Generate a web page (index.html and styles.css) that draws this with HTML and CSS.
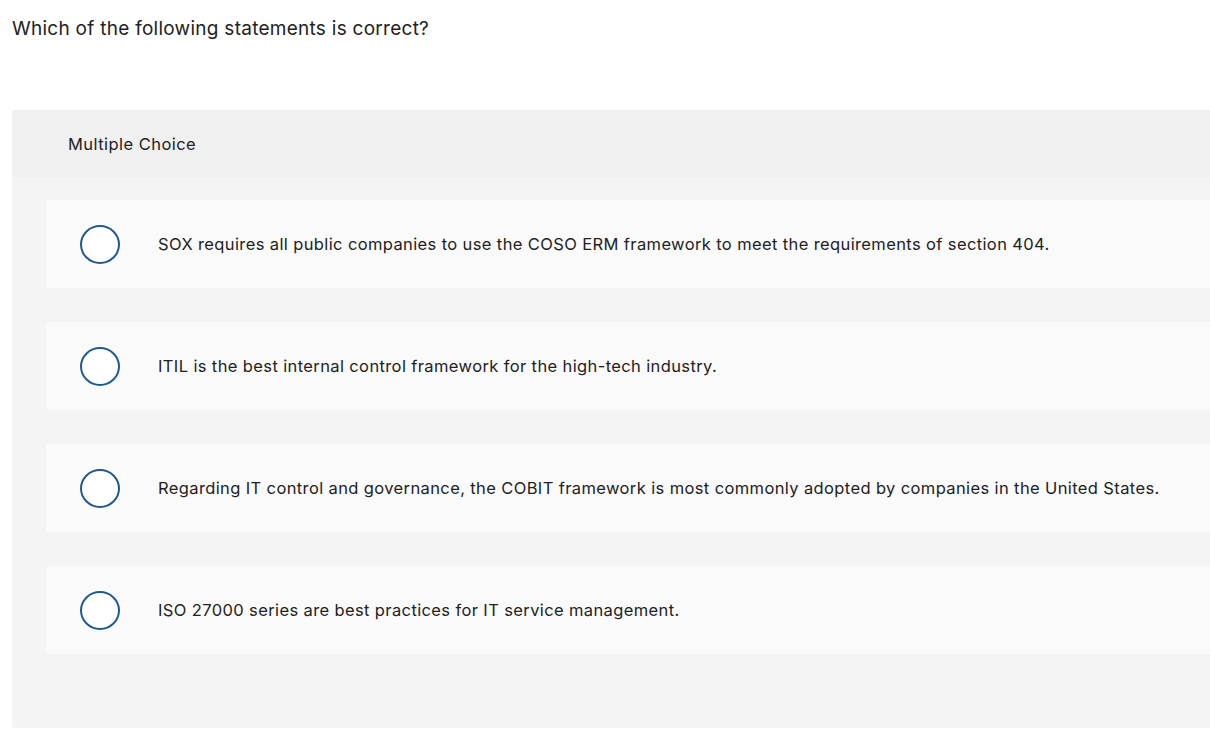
FILE: index.html
```html
<!DOCTYPE html>
<html>
<head>
<meta charset="utf-8">
<link rel="stylesheet" href="styles.css">
</head>
<body>
<div class="page">
  <p class="question">Which of the following statements is correct?</p>
  <div class="panel">
    <div class="panel-head">Multiple Choice</div>
    <div class="panel-body">
      <div class="option"><span class="radio"></span><span class="label">SOX requires all public companies to use the COSO ERM framework to meet the requirements of section 404.</span></div>
      <div class="option"><span class="radio"></span><span class="label">ITIL is the best internal control framework for the high-tech industry.</span></div>
      <div class="option"><span class="radio"></span><span class="label">Regarding IT control and governance, the COBIT framework is most commonly adopted by companies in the United States.</span></div>
      <div class="option"><span class="radio"></span><span class="label">ISO 27000 series are best practices for IT service management.</span></div>
    </div>
  </div>
</div>
</body>
</html>
```
FILE: styles.css
```css
html, body { margin: 0; padding: 0; background: #fff; }
body { font-family: Inter, "Open Sans", sans-serif; color: #222; width: 1210px; overflow: hidden; }
.page { padding: 0 0 0 12px; }
.question { margin: 0; padding-top: 17px; font-size: 19px; line-height: 24px; height: 93px; letter-spacing: 0.27px; }
.panel { background: #f4f4f4; border-radius: 3px 0 0 3px; height: 618px; }
.panel-head { background: #f0f0f0; height: 67px; display: flex; align-items: center; padding-left: 56px; font-size: 16.5px; line-height: 20px; letter-spacing: 0.45px; border-radius: 3px 0 0 0; }
.panel-body { padding: 23px 0 0 34px; display: flex; flex-direction: column; gap: 34px; }
.option { background: #fafafa; height: 88px; display: flex; align-items: center; border-radius: 3px 0 0 3px; }
.radio { width: 36px; height: 35px; border: 2px solid #1f5a8e; border-radius: 50%; margin-left: 34px; flex: none; background: #fff; }
.label { margin-left: 38px; font-size: 16.5px; line-height: 20px; letter-spacing: 0.38px; }
```
